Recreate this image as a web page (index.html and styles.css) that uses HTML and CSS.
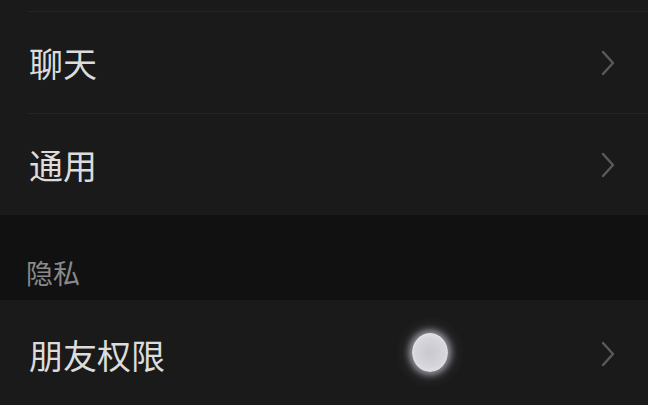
FILE: index.html
```html
<!DOCTYPE html>
<html lang="zh-CN">
<head>
<meta charset="utf-8">
<title>设置</title>
<link rel="stylesheet" href="styles.css">
</head>
<body>
<div class="screen">
  <div class="group">
    <div class="row-tail"></div>
    <div class="row">
      <div class="row-inner">
        <span class="label">聊天</span>
        <svg class="chev" viewBox="0 0 14 26" width="14" height="26"><polyline points="2,2 12,13 2,24" fill="none" stroke="#5a5a5a" stroke-width="2.4" stroke-linecap="round" stroke-linejoin="round"/></svg>
      </div>
    </div>
    <div class="row">
      <div class="row-inner">
        <span class="label">通用</span>
        <svg class="chev" viewBox="0 0 14 26" width="14" height="26"><polyline points="2,2 12,13 2,24" fill="none" stroke="#5a5a5a" stroke-width="2.4" stroke-linecap="round" stroke-linejoin="round"/></svg>
      </div>
    </div>
  </div>
  <div class="section-header"><span>隐私</span></div>
  <div class="group">
    <div class="row row-last">
      <div class="row-inner no-border">
        <span class="label">朋友权限</span>
        <svg class="chev" viewBox="0 0 14 26" width="14" height="26"><polyline points="2,2 12,13 2,24" fill="none" stroke="#5a5a5a" stroke-width="2.4" stroke-linecap="round" stroke-linejoin="round"/></svg>
      </div>
    </div>
  </div>
  <div class="touch"></div>
</div>
</body>
</html>
```
FILE: styles.css
```css
html, body {
  margin: 0;
  padding: 0;
  background: #1a1a1a;
}
.screen {
  position: relative;
  width: 648px;
  height: 405px;
  overflow: hidden;
  font-family: "Noto Sans CJK SC", "Noto Sans", sans-serif;
  background: #1a1a1a;
}
.group {
  background: #1a1a1a;
}
.row-tail {
  height: 11px;
}
.row {
  padding-left: 28px;
}
.row-inner {
  height: 101px;
  border-top: 1px solid #252525;
  display: flex;
  align-items: center;
  justify-content: space-between;
  padding-right: 33px;
}
.row-inner.no-border {
  border-top: none;
  height: 108px;
}
.label {
  color: #dcdcdc;
  font-size: 34px;
  line-height: 34px;
  padding-left: 1px;
  padding-top: 1px;
}
.chev {
  display: block;
}
.section-header {
  background: #111111;
  height: 85px;
  display: flex;
  align-items: flex-end;
  padding-left: 26px;
  box-sizing: border-box;
}
.section-header span {
  color: #8a8a8a;
  font-size: 27px;
  line-height: 27px;
  margin-bottom: 14px;
}
.touch {
  position: absolute;
  left: 412px;
  top: 333px;
  width: 36px;
  height: 39px;
  border-radius: 50%;
  background: radial-gradient(circle at 50% 50%, #c9c8ce 0%, #d6d5db 55%, #f2f2f6 100%);
  box-shadow: 0 0 6px 3px rgba(225, 225, 240, 0.55), 0 0 14px 6px rgba(200, 200, 220, 0.18);
}
```
